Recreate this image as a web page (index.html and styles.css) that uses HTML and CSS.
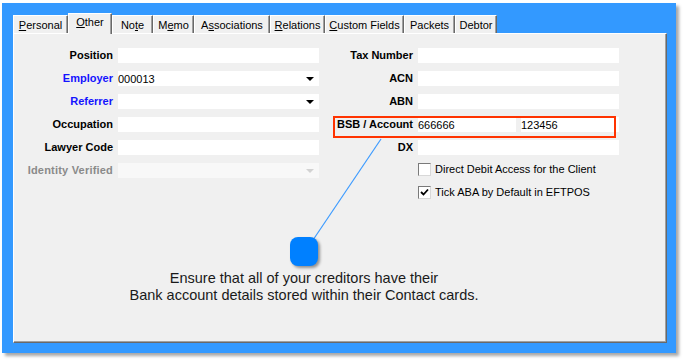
FILE: index.html
```html
<!DOCTYPE html>
<html>
<head>
<meta charset="utf-8">
<link rel="stylesheet" href="styles.css">
</head>
<body>
<div class="frame">
  <div class="tabs">
    <div class="tab"><u>P</u>ersonal</div>
    <div class="tab tab-active"><u>O</u>ther</div>
    <div class="tab">No<u>t</u>e</div>
    <div class="tab">M<u>e</u>mo</div>
    <div class="tab">A<u>s</u>sociations</div>
    <div class="tab"><u>R</u>elations</div>
    <div class="tab"><u>C</u>ustom Fields</div>
    <div class="tab">Packets</div>
    <div class="tab">Debtor</div>
  </div>
  <div class="panel">
    <div class="form">
      <div class="label">Position</div>
      <div class="field"></div>
      <div class="label">Tax Number</div>
      <div class="field"></div>

      <div class="label label-link">Employer</div>
      <div class="field field-select">000013<span class="arrow"></span></div>
      <div class="label">ACN</div>
      <div class="field"></div>

      <div class="label label-link">Referrer</div>
      <div class="field field-select"><span class="arrow"></span></div>
      <div class="label">ABN</div>
      <div class="field"></div>

      <div class="label">Occupation</div>
      <div class="field"></div>
      <div class="label">BSB / Account</div>
      <div class="split">
        <div class="field">666666</div>
        <div class="field">123456</div>
      </div>

      <div class="label">Lawyer Code</div>
      <div class="field"></div>
      <div class="label">DX</div>
      <div class="field"></div>

      <div class="label label-disabled label-wide">Identity Verified</div>
      <div class="field field-select field-disabled"><span class="arrow arrow-disabled"></span></div>
      <div class="check-row">
        <span class="checkbox"></span>
        <span class="check-text">Direct Debit Access for the Client</span>
      </div>

      <div class="check-row">
        <span class="checkbox"><svg width="11" height="11" viewBox="0 0 11 11"><path d="M2 5 L4.5 7.5 L9 2.5" fill="none" stroke="#000" stroke-width="1.8"/></svg></span>
        <span class="check-text">Tick ABA by Default in EFTPOS</span>
      </div>
    </div>

    <div class="note">Ensure that all of your creditors have their<br>Bank account details stored within their Contact cards.</div>

    <div class="highlight"></div>
    <svg class="pointer" width="652" height="308" viewBox="0 0 652 308">
      <line x1="367" y1="105" x2="299" y2="206" stroke="#3d9bff" stroke-width="1.2"/>
    </svg>
    <div class="marker"></div>
  </div>
</div>
</body>
</html>
```

FILE: styles.css
```css
html, body {
  margin: 0;
  padding: 0;
}

body {
  width: 685px;
  height: 361px;
  background: #ffffff;
  font-family: "Liberation Sans", Arial, sans-serif;
  overflow: hidden;
}

.frame {
  margin: 3px 0 0 2px;
  width: 674px;
  height: 350px;
  box-sizing: border-box;
  padding: 10px 9px 10px 11px;
  background: #3399ff;
  box-shadow: 3px 3px 3px rgba(0, 0, 0, 0.35);
  display: flex;
  flex-direction: column;
}

.tabs {
  height: 20px;
  display: flex;
  align-items: flex-end;
  position: relative;
  z-index: 2;
}

.tab {
  height: 18px;
  box-sizing: border-box;
  padding-top: 3px;
  background: #f0f0f0;
  border-top: 1px solid #ffffff;
  border-left: 1px solid #ffffff;
  border-right: 1px solid #696969;
  box-shadow: inset -1px 0 0 #a0a0a0;
  font-size: 11px;
  line-height: 13px;
  color: #000;
  text-align: center;
  white-space: nowrap;
}

.tab:nth-child(1) { width: 55px; }
.tab:nth-child(2) { width: 44px; }
.tab:nth-child(3) { width: 41px; }
.tab:nth-child(4) { width: 41px; }
.tab:nth-child(5) { width: 76px; }
.tab:nth-child(6) { width: 55px; }
.tab:nth-child(7) { width: 79px; }
.tab:nth-child(8) { width: 51px; }
.tab:nth-child(9) { width: 42px; }

.tab u {
  text-decoration: underline;
  text-underline-offset: 1px;
}

.tab-active {
  height: 21px;
  margin-bottom: -1px;
  padding-top: 2px;
}

.panel {
  flex: 1;
  position: relative;
  background: #f0f0f0;
  border-top: 1px solid #ffffff;
  border-left: 1px solid #ffffff;
  border-right: 1px solid #696969;
  border-bottom: 1px solid #696969;
  box-shadow: inset -1px -1px 0 #a0a0a0;
  padding-top: 14px;
}

.form {
  display: grid;
  grid-template-columns: 99px 201px 89px 201px;
  grid-auto-rows: 15px;
  column-gap: 5px;
  row-gap: 8px;
}

.label {
  font-size: 11px;
  font-weight: bold;
  line-height: 15px;
  text-align: right;
  color: #000;
  white-space: nowrap;
}

.label-wide {
  letter-spacing: 0.2px;
}

.label-link {
  color: #1414ff;
}

.label-disabled {
  color: #8a8a8a;
}

.field {
  position: relative;
  background: #ffffff;
  font-size: 11px;
  line-height: 16px;
  color: #000;
  padding-left: 0;
  height: 15px;
}

.field-disabled {
  background: #f8f8f8;
}

.arrow {
  position: absolute;
  right: 5px;
  top: 6px;
  width: 0;
  height: 0;
  border-left: 4px solid transparent;
  border-right: 4px solid transparent;
  border-top: 4px solid #000;
}

.arrow-disabled {
  border-top-color: #d2d2d2;
}

.split {
  display: flex;
  gap: 5px;
}

.split .field {
  flex: 1;
}

.check-row {
  grid-column: 4;
  display: flex;
  align-items: flex-start;
  gap: 4px;
}

.checkbox {
  width: 13px;
  height: 13px;
  box-sizing: border-box;
  background: #ffffff;
  border-top: 1px solid #7a7a7a;
  border-left: 1px solid #7a7a7a;
  border-right: 1px solid #d8d8d8;
  border-bottom: 1px solid #d8d8d8;
  display: flex;
  align-items: center;
  justify-content: center;
}

.checkbox svg {
  display: block;
}

.check-text {
  font-size: 11px;
  line-height: 13px;
  color: #000;
  white-space: nowrap;
}

.note {
  margin-top: 69px;
  margin-left: 90px;
  width: 400px;
  text-align: center;
  font-size: 14.5px;
  line-height: 17px;
  color: #1a1a1a;
}

.highlight {
  position: absolute;
  left: 319px;
  top: 82px;
  width: 283px;
  height: 22px;
  box-sizing: border-box;
  border: 2px solid #ff3300;
}

.pointer {
  position: absolute;
  left: 0;
  top: 0;
}

.marker {
  position: absolute;
  left: 276px;
  top: 203px;
  width: 28px;
  height: 29px;
  border-radius: 8px;
  background: #0080ff;
  box-shadow: 2px 2px 3px rgba(0, 0, 0, 0.4);
}
```
